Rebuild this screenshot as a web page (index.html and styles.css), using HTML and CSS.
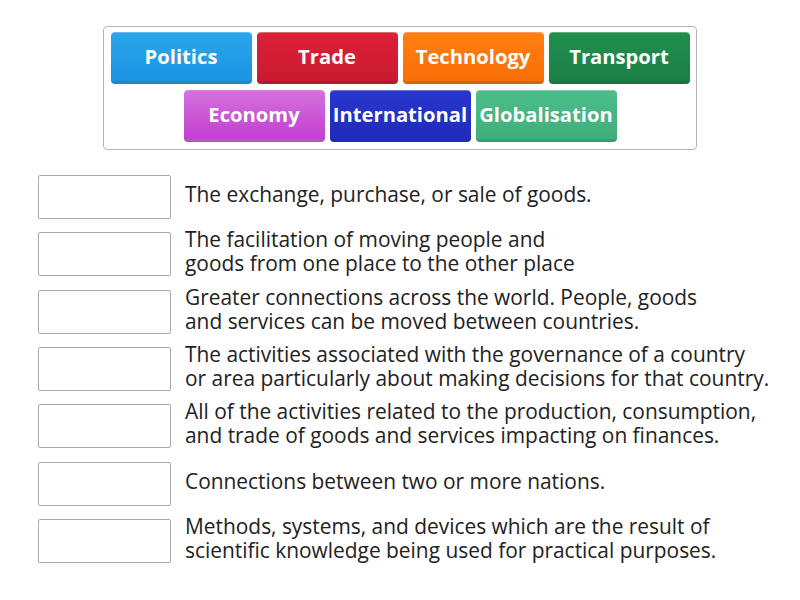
FILE: index.html
```html
<!DOCTYPE html>
<html>
<head>
<meta charset="utf-8">
<link rel="stylesheet" href="styles.css">
</head>
<body>
<div class="page">
  <div class="bank">
    <div class="tile blue">Politics</div>
    <div class="tile red">Trade</div>
    <div class="tile orange">Technology</div>
    <div class="tile green">Transport</div>
    <div class="tile purple">Economy</div>
    <div class="tile navy">International</div>
    <div class="tile teal">Globalisation</div>
  </div>
  <div class="rows">
    <div class="row"><div class="slot"></div><div class="def">The exchange, purchase, or sale of goods.</div></div>
    <div class="row"><div class="slot"></div><div class="def">The facilitation of moving people and<br>goods from one place to the other place</div></div>
    <div class="row"><div class="slot"></div><div class="def">Greater connections across the world. People, goods<br>and services can be moved between countries.</div></div>
    <div class="row"><div class="slot"></div><div class="def">The activities associated with the governance of a country<br>or area particularly about making decisions for that country.</div></div>
    <div class="row"><div class="slot"></div><div class="def">All of the activities related to the production, consumption,<br>and trade of goods and services impacting on finances.</div></div>
    <div class="row"><div class="slot"></div><div class="def">Connections between two or more nations.</div></div>
    <div class="row"><div class="slot"></div><div class="def">Methods, systems, and devices which are the result of<br>scientific knowledge being used for practical purposes.</div></div>
  </div>
</div>
</body>
</html>
```
FILE: styles.css
```css
html, body {
  margin: 0;
  padding: 0;
  background: #fff;
}
.page {
  width: 800px;
  height: 600px;
  font-family: "Open Sans", "Liberation Sans", sans-serif;
  padding-top: 26px;
  box-sizing: border-box;
}
.bank {
  margin-left: 103px;
  width: 594px;
  height: 124px;
  box-sizing: border-box;
  border: 1px solid #b5b5b5;
  border-radius: 4px;
  padding: 5px 6px;
  display: flex;
  flex-wrap: wrap;
  justify-content: center;
  align-content: flex-start;
  column-gap: 5px;
  row-gap: 6px;
}
.tile {
  width: 141px;
  height: 52px;
  box-sizing: border-box;
  border-radius: 4px;
  color: #fff;
  font-weight: 700;
  font-size: 20.2px;
  display: flex;
  align-items: center;
  justify-content: center;
  padding-bottom: 2px;
  border-top: 1px solid rgba(255,255,255,0.35);
  border-bottom: 3px solid rgba(0,0,0,0.18);
  white-space: nowrap;
}
.blue { background: linear-gradient(#2aa6ec, #1a94e2); }
.red { background: linear-gradient(#dd2038, #c81b30); }
.orange { background: linear-gradient(#ff7f12, #f86f08); }
.green { background: linear-gradient(#20904e, #1b7f44); }
.purple { background: linear-gradient(#d570dc, #c23fd0); }
.navy { background: linear-gradient(#2936cc, #1f2bbd); }
.teal { background: linear-gradient(#4cbe8a, #3fae7c); }

.rows {
  margin-top: 25px;
  margin-left: 38px;
  display: flex;
  flex-direction: column;
  row-gap: 13.33px;
}
.row {
  display: flex;
  align-items: center;
  height: 44px;
}
.slot {
  width: 133px;
  height: 44px;
  box-sizing: border-box;
  border: 1px solid #a9a9a9;
  border-radius: 2px;
  flex: none;
}
.def {
  margin-left: 14px;
  font-size: 20.9px;
  line-height: 24px;
  color: #222;
  white-space: nowrap;
  padding-bottom: 6px;
}
```
